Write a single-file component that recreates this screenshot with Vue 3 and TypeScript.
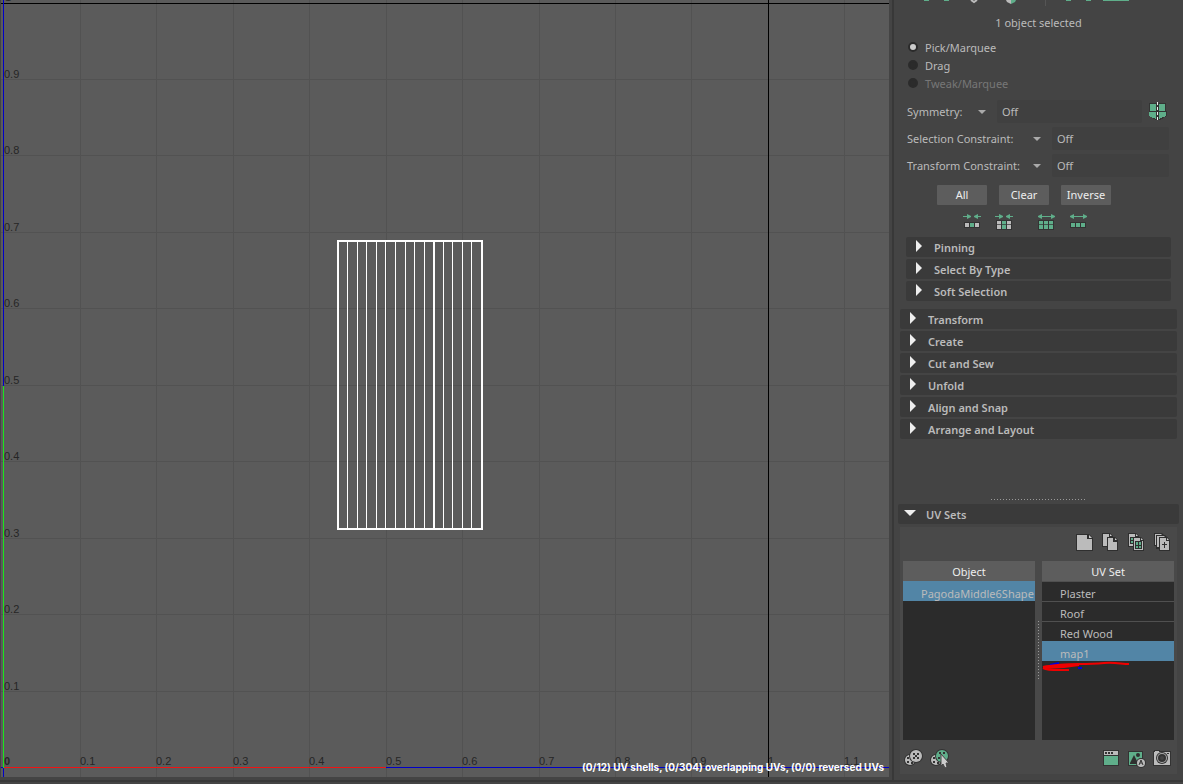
<script setup lang="ts">
import { ref } from 'vue'

interface Tick { pos: number; label: string }

const vertical: Tick[] = [
  { pos: 80, label: '0.1' }, { pos: 156, label: '0.2' }, { pos: 233, label: '0.3' },
  { pos: 309, label: '0.4' }, { pos: 386, label: '0.5' }, { pos: 462, label: '0.6' },
  { pos: 539, label: '0.7' }, { pos: 615, label: '0.8' }, { pos: 691, label: '0.9' },
  { pos: 844, label: '1.1' },
]
const horizontal: Tick[] = [
  { pos: 691, label: '0.1' }, { pos: 614, label: '0.2' }, { pos: 538, label: '0.3' },
  { pos: 461, label: '0.4' }, { pos: 385, label: '0.5' }, { pos: 308, label: '0.6' },
  { pos: 232, label: '0.7' }, { pos: 155, label: '0.8' }, { pos: 79, label: '0.9' },
]
const seams: number[] = [347, 357, 366, 376, 385, 395, 405, 414, 424, 443, 452, 462, 471]

const mode = ref('pick')
const modes = [
  { id: 'pick', label: 'Pick/Marquee', off: false },
  { id: 'drag', label: 'Drag', off: false },
  { id: 'tweak', label: 'Tweak/Marquee', off: true },
]
const subSections = ['Pinning', 'Select By Type', 'Soft Selection']
const sections = ['Transform', 'Create', 'Cut and Sew', 'Unfold', 'Align and Snap', 'Arrange and Layout']
const uvSets = ['Plaster', 'Roof', 'Red Wood', 'map1']
const activeSet = ref('map1')
</script>

<template>
  <div class="app">
    <div class="workspace">
      <main class="viewport">
        <svg class="grid" shape-rendering="crispEdges" aria-label="UV canvas">
          <g fill="#525252">
            <rect v-for="t in vertical" :key="'v' + t.pos" :x="t.pos" y="0" width="1" height="100%" />
            <rect v-for="t in horizontal" :key="'h' + t.pos" x="1" :y="t.pos" width="100%" height="1" />
          </g>
          <rect x="0" y="0" width="1" height="100%" fill="#444" />
          <rect x="1" y="3" width="100%" height="1" fill="#000" />
          <rect x="768" y="0" width="1" height="100%" fill="#000" />
          <g class="ticks">
            <text x="5" y="1">1</text>
            <text v-for="t in horizontal" :key="'y' + t.pos" x="4" :y="t.pos - 1">{{ t.label }}</text>
            <text class="origin" x="4" y="765">0</text>
            <text v-for="t in vertical" :key="'x' + t.pos" :x="t.pos" y="765">{{ t.label }}</text>
            <text x="768" y="765">1</text>
          </g>
          <rect x="3" y="0" width="1" height="100%" fill="#0000c8" />
          <rect x="1" y="767" width="100%" height="1" fill="#0000c8" />
          <rect x="3" y="386" width="1" height="382" fill="#1be61b" />
          <rect x="4" y="767" width="382" height="1" fill="#f01414" />
          <g fill="#fff">
            <rect v-for="x in seams" :key="x" :x="x" y="241" width="1" height="288" />
            <rect x="337" y="240" width="2" height="290" />
            <rect x="433" y="240" width="2" height="290" />
            <rect x="481" y="240" width="2" height="290" />
            <rect x="337" y="240" width="146" height="2" />
            <rect x="337" y="528" width="146" height="2" />
          </g>
        </svg>
        <p class="stats">(0/12) UV shells, (0/304) overlapping UVs, (0/0) reversed UVs</p>
      </main>

      <aside class="panel">
        <svg class="toolstrip" viewBox="0 0 289 8" width="289" height="8" aria-hidden="true">
          <g fill="#5fae8a">
            <path d="M30 0h5v1h-5zM50 0h5v1h-5zM172 0h5v1h-5zM192 0h5v1h-5zM209 0h26v1h-26z" />
            <path d="M117 0h5l-1 2-4 2z" />
          </g>
          <path d="M77 0l3 2 3-2" fill="none" stroke="#bbb" stroke-width="2" />
          <path d="M112 0h5v4l-4-2z" fill="#bbb" />
          <rect x="151" y="0" width="1" height="6" fill="#555" />
        </svg>

        <p class="status">1 object selected</p>

        <div class="modes">
          <label v-for="m in modes" :key="m.id" class="mode" :class="{ off: m.off }">
            <input v-model="mode" type="radio" name="mode" :value="m.id" :disabled="m.off">
            {{ m.label }}
          </label>
        </div>

        <div class="fields">
          <div class="field">
            <label class="short" for="symmetry">Symmetry:</label>
            <i class="caret"></i>
            <select id="symmetry"><option>Off</option></select>
            <button class="icon mirror" aria-label="Symmetrize">
              <svg viewBox="0 0 19 21" width="19" height="21" shape-rendering="crispEdges">
                <path d="M1 2h17v8h1v5l-7 4H8l-7-4z" fill="#333" />
                <path d="M2 3h6v7H2zM11 3h6v7h-6zM1 11h7v7l-7-3zM18 11h-7v7l7-3z" fill="#5fae8a" />
                <path d="M9 1h1v3H9zM9 6h1v3H9zM9 11h1v3H9zM9 16h1v3H9z" fill="#eee" />
              </svg>
            </button>
          </div>
          <div class="field inset">
            <label for="selcon">Selection Constraint:</label>
            <i class="caret"></i>
            <select id="selcon"><option>Off</option></select>
          </div>
          <div class="field inset">
            <label for="tracon">Transform Constraint:</label>
            <i class="caret"></i>
            <select id="tracon"><option>Off</option></select>
          </div>
        </div>

        <div class="actions">
          <button>All</button>
          <button>Clear</button>
          <button>Inverse</button>
        </div>

        <div class="grow">
          <button class="icon" aria-label="Shrink selection">
            <svg viewBox="0 0 20 18" width="20" height="18">
              <path d="M1 4h4V2l4 2v1L5 7V5H1zM19 4h-3V2l-4 2v1l4 2V5h3z" fill="#5fae8a" />
              <path d="M2 10h16v6H2z" fill="#333" />
              <path d="M3 11h4v4H3zM13 11h4v4h-4z" fill="#bbb" /><path d="M8 11h4v4H8z" fill="#5fae8a" />
            </svg>
          </button>
          <button class="icon" aria-label="Shrink loop">
            <svg viewBox="0 0 20 18" width="20" height="18">
              <path d="M1 4h4V2l4 2v1L5 7V5H1zM19 4h-3V2l-4 2v1l4 2V5h3z" fill="#5fae8a" />
              <path d="M2 8h16v10H2z" fill="#333" />
              <path d="M3 9h4v8H3zM13 9h4v8h-4z" fill="#bbb" /><path d="M8 9h4v8H8z" fill="#5fae8a" />
              <path d="M3 12h14v1H3z" fill="#333" opacity=".7" />
            </svg>
          </button>
          <button class="icon apart" aria-label="Grow loop">
            <svg viewBox="0 0 20 18" width="20" height="18">
              <path d="M1 4l4-2v2h9V2l4 2v1l-4 2V5H5v2L1 5z" fill="#5fae8a" />
              <path d="M1 8h16v10H1z" fill="#333" />
              <path d="M2 9h4v8H2zM7 9h4v8H7zM12 9h4v8h-4z" fill="#5fae8a" />
              <path d="M2 12h14v1H2z" fill="#333" opacity=".7" />
            </svg>
          </button>
          <button class="icon" aria-label="Grow selection">
            <svg viewBox="0 0 20 18" width="20" height="18">
              <path d="M1 4l4-2v2h9V2l4 2v1l-4 2V5H5v2L1 5z" fill="#5fae8a" />
              <path d="M1 10h16v6H1z" fill="#333" />
              <path d="M2 11h4v4H2zM7 11h4v4H7zM12 11h4v4h-4z" fill="#5fae8a" />
            </svg>
          </button>
        </div>

        <div class="folds sub">
          <button v-for="s in subSections" :key="s" class="fold">{{ s }}</button>
        </div>
        <div class="folds">
          <button v-for="s in sections" :key="s" class="fold">{{ s }}</button>
        </div>

        <div class="handle"></div>

        <button class="fold open">UV Sets</button>
        <section class="sets">
          <div class="bar end">
            <button class="icon" aria-label="New UV set">
              <svg viewBox="0 0 18 20" width="18" height="20">
                <path d="M0 1h13l4 4v13H0z" fill="#2f2f2f" /><path d="M1 2h10v4h5v11H1z" fill="#bbb" /><path d="M13 2l3 3h-3z" fill="#ccc" />
              </svg>
            </button>
            <button class="icon" aria-label="Copy UV set">
              <svg viewBox="0 0 18 20" width="18" height="20">
                <path d="M0 0h8l3 3v11H0z" fill="#2f2f2f" /><path d="M1 1h6v3h3v9H1z" fill="#bbb" /><path d="M8 1l2 2H8z" fill="#ccc" />
                <path d="M5 4h8l3 3v11H5z" fill="#2f2f2f" /><path d="M6 5h5v4h4v8H6z" fill="#bbb" /><path d="M13 5l2 2h-2z" fill="#ccc" />
              </svg>
            </button>
            <button class="icon" aria-label="Copy UVs to set">
              <svg viewBox="0 0 18 20" width="18" height="20">
                <path d="M0 0h8l3 3v11H0z" fill="#2f2f2f" /><path d="M1 1h6v3h3v9H1z" fill="#bbb" /><path d="M8 1l2 2H8z" fill="#ccc" />
                <path d="M2 4h4v7H2z" fill="#2f2f2f" /><path d="M3 5h2v2H3zM3 8h2v2H3z" fill="#5fae8a" />
                <path d="M5 4h8l3 3v11H5z" fill="#2f2f2f" /><path d="M6 5h6v3h3v9H6z" fill="#bbb" /><path d="M13 5l2 2h-2z" fill="#ccc" />
                <path d="M7 8h7v8H7z" fill="#2f2f2f" /><path d="M8 9h2v3H8zM11 9h2v3h-2zM8 13h2v2H8zM11 13h2v2h-2z" fill="#5fae8a" />
              </svg>
            </button>
            <button class="icon" aria-label="Duplicate UV set">
              <svg viewBox="0 0 18 20" width="18" height="20">
                <path d="M0 0h8l3 3v10H0z" fill="#2f2f2f" /><path d="M1 1h6l3 3v8H1z" fill="#bbb" />
                <path d="M2 2h9l3 3v11H2z" fill="#2f2f2f" /><path d="M3 3h7l3 3v8H3z" fill="#bbb" />
                <path d="M5 4h8l3 3v11H5z" fill="#2f2f2f" /><path d="M6 5h6v3h3v9H6z" fill="#bbb" /><path d="M13 5l2 2h-2z" fill="#ccc" />
                <path d="M10 9h1v2h2v1h-2v3h-1v-3H8v-1h2z" fill="#2f2f2f" />
              </svg>
            </button>
          </div>

          <div class="lists">
            <div class="list">
              <table>
                <thead><tr><th>Object</th></tr></thead>
                <tbody><tr class="active"><td>PagodaMiddle6Shape</td></tr></tbody>
              </table>
            </div>
            <div class="splitter"></div>
            <div class="list">
              <table>
                <thead><tr><th>UV Set</th></tr></thead>
                <tbody>
                  <tr v-for="s in uvSets" :key="s" :class="{ active: s === activeSet }" @click="activeSet = s">
                    <td>{{ s }}</td>
                  </tr>
                </tbody>
              </table>
              <svg class="scribble" viewBox="0 0 90 12" width="90" height="12" aria-hidden="true">
                <path d="M8 4l9-2M36 7h4" stroke="#0000e0" stroke-width="2" />
                <path d="M1 6C12 4 20 3 36 3S52 3 62 2s18 1 25 1" fill="none" stroke="#f00000" stroke-width="2" />
                <path d="M1 6c12-2 22-1 36-2L22 6 4 7" fill="none" stroke="#f00000" stroke-width="2" />
                <path d="M1 7c6 3 14 2 26 2" fill="none" stroke="#f00000" stroke-width="2" />
              </svg>
            </div>
          </div>

          <div class="bar foot">
            <button class="icon" aria-label="Share instances">
              <svg viewBox="0 0 20 20" width="20" height="20">
                <circle cx="7" cy="12" r="6" fill="#333" /><circle cx="7" cy="12" r="5" fill="#bbb" />
                <path d="M4 9h2v2H4zM4 13h2v2H4zM8 14h2v2H8z" fill="#333" />
                <circle cx="13" cy="8" r="7" fill="#333" /><circle cx="13" cy="8" r="6" fill="#bbb" />
                <path d="M10 5h2v2h-2zM14 5h2v2h-2zM12 7h2v2h-2zM10 9h2v2h-2zM14 9h2v2h-2z" fill="#333" />
              </svg>
            </button>
            <button class="icon" aria-label="Select by instance">
              <svg viewBox="0 0 20 20" width="20" height="20">
                <circle cx="6" cy="12" r="6" fill="#333" /><circle cx="6" cy="12" r="5" fill="#bbb" />
                <path d="M3 9h2v2H3zM3 13h2v2H3zM7 14h2v2H7z" fill="#333" />
                <circle cx="12" cy="8" r="7" fill="#333" /><circle cx="12" cy="8" r="6" fill="#5fae8a" />
                <path d="M9 4h2v2H9zM13 4h2v2h-2zM8 9h2v2H8z" fill="#333" />
                <path d="M11 6v12l2-2 2 4 2-1-1-4h3z" fill="#ccc" stroke="#444" stroke-width="1" />
              </svg>
            </button>
            <span class="fill"></span>
            <button class="icon" aria-label="UV set editor">
              <svg viewBox="0 0 18 20" width="18" height="20">
                <path d="M0 2h16v16H0z" fill="#333" /><path d="M1 3h14v4H1z" fill="#bbb" />
                <path d="M2 4h2v2H2zM5 4h2v2H5zM8 4h2v2H8z" fill="#333" /><path d="M1 8h14v9H1z" fill="#5fae8a" />
              </svg>
            </button>
            <button class="icon" aria-label="Auto load texture">
              <svg viewBox="0 0 18 20" width="18" height="20">
                <path d="M0 3h15v15H0z" fill="#333" /><path d="M1 4h13v13H1z" fill="#5fae8a" />
                <path d="M2 15l4-8 3 6 2-2 3 5H2z" fill="#2f2f2f" /><circle cx="10" cy="7" r="2" fill="#2f2f2f" />
                <circle cx="13" cy="15" r="5" fill="#333" /><circle cx="13" cy="15" r="4" fill="#bbb" />
                <path d="M11 17l2-5 2 5M12 15h2" fill="none" stroke="#333" />
              </svg>
            </button>
            <button class="icon" aria-label="UV snapshot">
              <svg viewBox="0 0 18 20" width="18" height="20">
                <path d="M0 3h1V2h6v1h11v15H0z" fill="#333" /><path d="M1 4h1V3h4v1h11v13H1z" fill="#bbb" />
                <circle cx="9" cy="10" r="6" fill="#333" /><circle cx="9" cy="10" r="5" fill="#aaa" /><circle cx="9" cy="10" r="4" fill="#333" />
                <circle cx="9" cy="10" r="2" fill="#444" />
                <path d="M14 5h2v1h-2z" fill="#333" />
              </svg>
            </button>
          </div>
        </section>
      </aside>
    </div>
    <footer class="edge"></footer>
  </div>
</template>

<style scoped>
.app {
  display: flex;
  flex-direction: column;
  height: 100vh;
  background: #444;
  color: #bbb;
  font: 11px/18px "Noto Sans", "Open Sans", sans-serif;
}
p { margin: 0; }
button, select {
  margin: 0;
  padding: 0;
  border: 0;
  background: none;
  color: inherit;
  font: inherit;
}
svg { display: block; }
.workspace { display: flex; flex: 1; min-height: 0; }
.viewport {
  position: relative;
  flex: 1;
  min-width: 0;
  margin: 0 3px 3px 0;
  background: #5b5b5b;
  overflow: hidden;
}
.grid { width: 100%; height: 100%; }
.ticks text {
  fill: #262626;
  font: 11px "Liberation Sans", Arial, sans-serif;
}
.ticks .origin { font-weight: bold; }
.stats {
  position: absolute;
  right: 5px;
  bottom: 3px;
  color: #fff;
  font: bold 10px/14px Inter, "Liberation Sans", Arial, sans-serif;
  white-space: nowrap;
}
.panel {
  display: flex;
  flex-direction: column;
  flex: 0 0 289px;
  border-left: 2px solid #383838;
}
.toolstrip { flex: none; }
.status { margin-top: 6px; text-align: center; }
.modes { margin: 7px 0 0 14px; }
.mode { display: flex; align-items: center; gap: 7px; height: 18px; }
.mode.off { color: #777; }
.mode input {
  appearance: none;
  width: 10px;
  height: 10px;
  margin: 0 0 2px;
  border: 2px solid #2b2b2b;
  border-radius: 50%;
  background: #2b2b2b;
}
.mode input:checked { background: #ccc; }
.fields {
  display: flex;
  flex-direction: column;
  gap: 4px;
  margin: 7px 14px 0 13px;
}
.field { display: flex; align-items: center; height: 23px; }
.field label { width: 126px; }
.field .short { width: 71px; }
.caret {
  width: 0;
  margin-right: 11px;
  border: 4px solid transparent;
  border-top: 4px solid #aaa;
  border-bottom: 0;
}
.field select {
  appearance: none;
  flex: 1;
  height: 23px;
  padding-left: 5px;
  border-radius: 2px;
  background: #404040;
}
.field .short ~ select { margin-right: 6px; }
.mirror { margin-right: 2px; }
.actions { display: flex; justify-content: center; gap: 12px; margin: 8px 29px 0 0; }
.actions button {
  width: 50px;
  height: 20px;
  border-radius: 1px;
  background: #5d5d5d;
  color: #eee;
}
.grow { display: flex; gap: 12px; margin: 7px 0 7px 68px; }
.apart { margin-left: 11px; }
.folds { display: flex; flex-direction: column; gap: 2px; margin: 8px 6px 0; }
.folds.sub { margin: 0 12px; }
.fold {
  position: relative;
  flex: none;
  height: 20px;
  padding: 1px 0 0 28px;
  border-radius: 2px;
  background: #3a3a3a;
  font-weight: 600;
  text-align: left;
}
.fold::before {
  content: "";
  position: absolute;
  left: 10px;
  top: 3px;
  border: 6px solid transparent;
  border-left-color: #eee;
  border-right: 0;
}
.fold.open { margin: 4px 4px 3px; }
.fold.open::before {
  left: 6px;
  top: 6px;
  border: 6px solid transparent;
  border-top-color: #eee;
  border-bottom: 0;
}
.handle {
  width: 95px;
  height: 1px;
  margin: auto auto 0;
  background: repeating-linear-gradient(90deg, #999 0 1px, transparent 1px 3px);
}
.sets {
  margin: 0 6px 6px;
  padding: 6px 3px;
  background: #494949;
}
.bar { display: flex; gap: 8px; height: 20px; }
.bar.end { justify-content: flex-end; padding-right: 2px; }
.bar.foot { margin-top: 8px; gap: 7px; padding-right: 3px; }
.fill { flex: 1; }
.lists { display: flex; height: 179px; margin-top: 8px; }
.list { position: relative; flex: 1; min-width: 0; background: #2b2b2b; }
.splitter {
  align-self: center;
  width: 1px;
  height: 59px;
  margin: 0 3px;
  background: repeating-linear-gradient(180deg, #999 0 1px, transparent 1px 3px);
}
table { width: 100%; table-layout: fixed; border-spacing: 0; }
th {
  height: 18px;
  padding: 2px 0 0;
  background: #5d5d5d;
  color: #eee;
  font-weight: normal;
}
td {
  height: 15px;
  padding: 4px 0 0 18px;
  border-top: 1px solid #505050;
  line-height: 15px;
  white-space: nowrap;
  overflow: hidden;
}
.active td { border-color: #5285a6; background: #5285a6; }
.scribble { position: absolute; left: 0; top: 100px; }
.edge { flex: none; height: 2px; border-top: 2px solid #383838; }
</style>

<style>
body { background: #444; overflow: hidden; }
</style>
